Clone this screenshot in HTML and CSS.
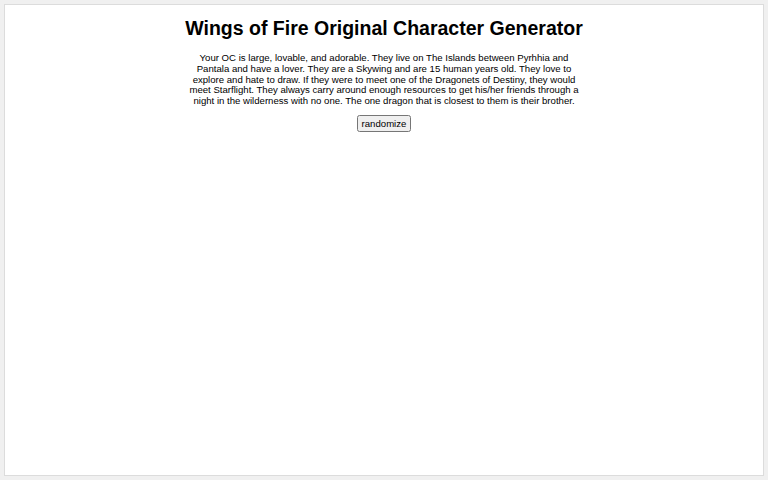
FILE: index.html
```html
<!DOCTYPE html>
<html lang="en">
<head>
    <meta charset="UTF-8">
    <meta name="viewport" content="width=device-width, initial-scale=1.0">
    <title>Wings of Fire Original Character Generator</title>
    <link rel="stylesheet" href="styles.css">
</head>
<body>
    <div class="page">
        <h1>Wings of Fire Original Character Generator</h1>

        <!-- generated description goes here -->
        <p id="ocText" class="oc-text">Your OC is large, lovable, and adorable. They live on The Islands between Pyrhhia and Pantala and have a lover. They are a Skywing and are 15 human years old. They love to explore and hate to draw. If they were to meet one of the Dragonets of Destiny, they would meet Starflight. They always carry around enough resources to get his/her friends through a night in the wilderness with no one. The one dragon that is closest to them is their brother.</p>

        <button id="randomizeBtn">randomize</button>
    </div>
</body>
</html>
```

FILE: styles.css
```css
html, body {
    height: 100%;
}

body {
    font-family: "Liberation Sans", Arial, sans-serif;
    background-color: #f0f0f0;
    margin: 0;
    padding: 4px;
    box-sizing: border-box;
}

.page {
    height: 100%;
    box-sizing: border-box;
    background-color: #fff;
    border: 1px solid #dcdcdc;
    text-align: center;
    padding-top: 12px;
}

h1 {
    font-size: 19.5px;
    margin: 0 0 13px;
    color: #000;
}

.oc-text {
    font-size: 9.6px;
    line-height: 10.75px;
    max-width: 390px;
    margin: 0 auto 6px;
    color: #000;
}

button {
    font-family: "Liberation Sans", Arial, sans-serif;
    font-size: 9.6px;
    padding: 1px 3px;
}
```
